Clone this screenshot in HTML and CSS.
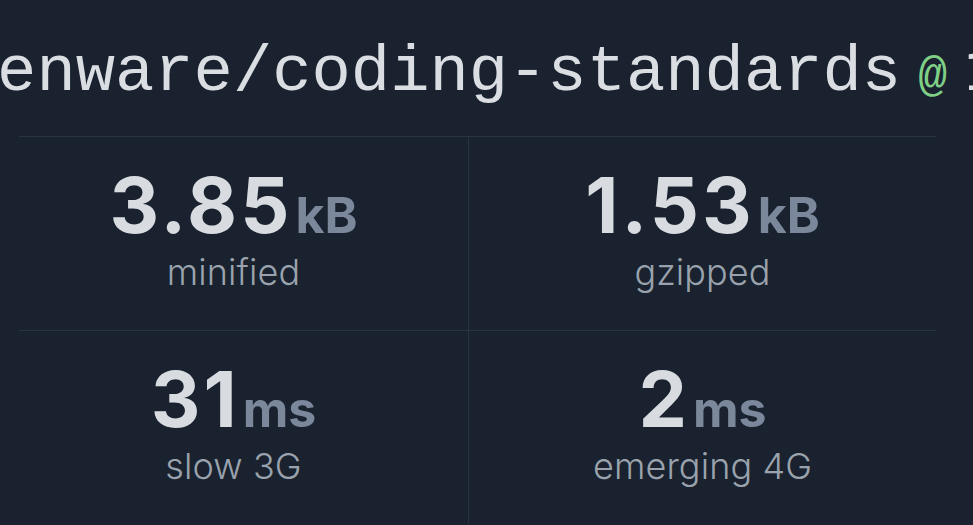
FILE: index.html
```html
<!DOCTYPE html>
<html lang="en">
<head>
<meta charset="utf-8">
<title>@kitchenware/coding-standards</title>
<link rel="stylesheet" href="styles.css">
</head>
<body>
<header class="title-bar">
  <h1 class="package-title"><span class="package-name">@kitchenware/coding-standards</span><span class="package-sep">@</span><span class="package-version">1.0.12</span></h1>
</header>
<section class="stats">
  <div class="stats-row">
    <div class="stat stat-left">
      <div class="stat-value">3.85<span class="stat-unit">kB</span></div>
      <div class="stat-label">minified</div>
    </div>
    <div class="stat stat-right">
      <div class="stat-value">1.53<span class="stat-unit">kB</span></div>
      <div class="stat-label">gzipped</div>
    </div>
  </div>
  <div class="stats-row">
    <div class="stat stat-left">
      <div class="stat-value">31<span class="stat-unit">ms</span></div>
      <div class="stat-label">slow 3G</div>
    </div>
    <div class="stat stat-right">
      <div class="stat-value">2<span class="stat-unit">ms</span></div>
      <div class="stat-label">emerging 4G</div>
    </div>
  </div>
</section>
</body>
</html>
```
FILE: styles.css
```css
html, body {
  margin: 0;
  padding: 0;
  background: #19222e;
  overflow: hidden;
}
body {
  width: 973px;
  height: 525px;
  font-family: Inter, "Noto Sans", sans-serif;
}
.title-bar {
  height: 136px;
  padding-top: 33px;
  box-sizing: border-box;
  display: flex;
  justify-content: center;
  overflow: hidden;
}
.package-title {
  margin: 0;
  padding-right: 12px;
  display: flex;
  justify-content: center;
  align-items: baseline;
  white-space: nowrap;
  font-family: "Liberation Mono", "DejaVu Sans Mono", monospace;
  font-weight: 400;
  font-size: 65.5px;
  line-height: 80px;
  color: #dadde2;
}
.package-sep {
  color: #7fcf87;
  font-size: 48px;
  margin: 0 17px;
}
.stats {
  width: 936px;
}
.stats-row {
  margin-left: 19px;
  width: 917px;
  height: 194px;
  box-sizing: border-box;
  border-top: 1px solid #2a3441;
  display: grid;
  grid-template-columns: 450px 467px;
}
.stat {
  display: flex;
  flex-direction: column;
  align-items: center;
  padding-top: 30px;
  box-sizing: border-box;
}
.stat-left {
  border-right: 1px solid #2a3441;
  padding-right: 20px;
}
.stat-value {
  font-weight: 700;
  font-size: 77px;
  line-height: 76px;
  color: #d8dbe0;
  letter-spacing: 3px;
}
.stat-unit {
  font-size: 50px;
  color: #7b879a;
  margin-left: 3px;
  letter-spacing: 0;
}
.stat-label {
  margin-top: -3px;
  font-weight: 300;
  font-size: 36px;
  line-height: 44px;
  letter-spacing: 0.1px;
  color: #9aa3ad;
}
```
